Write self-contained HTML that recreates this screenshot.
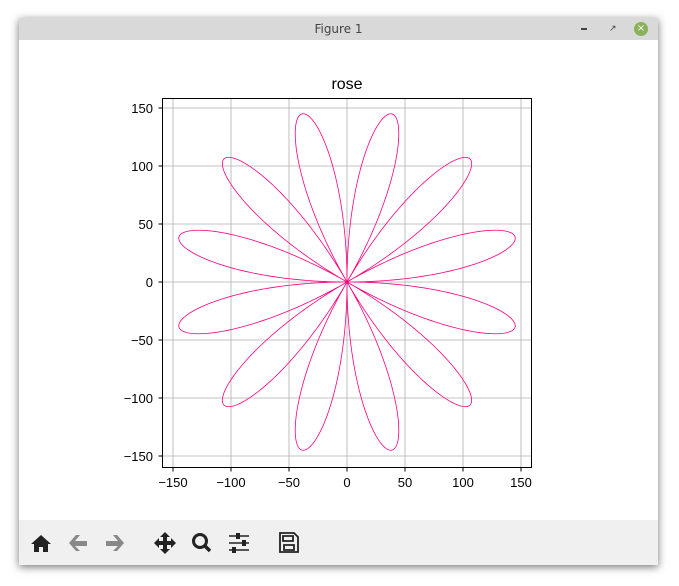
<!DOCTYPE html>
<html><head><meta charset="utf-8"><style>
body{margin:0;width:679px;height:586px;background:#fff;overflow:hidden;font-family:"Liberation Sans","DejaVu Sans",sans-serif;}
.win{position:absolute;left:19px;top:18px;width:639px;height:547px;background:#fff;box-shadow:0 2px 8px rgba(0,0,0,.55);}
.tb{position:absolute;left:0;top:0;width:639px;height:22px;background:#d9d9d9;text-align:center;font:12px "DejaVu Sans",sans-serif;color:#444;line-height:23px;}
.bar{position:absolute;left:0;top:502px;width:639px;height:45px;background:#f0f0f0;}
</style></head><body>
<div class="win">
<div class="tb">Figure 1
<span style="position:absolute;left:562px;top:10px;width:6px;height:2px;background:#444"></span>
<span style="position:absolute;left:590px;top:7px;font-size:9px;line-height:9px">↗</span>
<span style="position:absolute;left:615px;top:4px;width:14px;height:14px;border-radius:50%;background:#8bb15a;color:#fff;font-size:10px;line-height:14px">×</span>
</div>
<div class="bar"></div>
</div>
<svg width="679" height="586" style="position:absolute;left:0;top:0" font-family="Liberation Sans, DejaVu Sans, sans-serif" font-size="13">
<text x="347" y="89" text-anchor="middle" font-size="16">rose</text>
<g stroke="#b0b0b0" stroke-width="0.8" id="grid"></g>
<path id="rose" fill="none" stroke="#ff0080" stroke-width="0.8"/>
<rect x="162.5" y="98.5" width="369" height="369" fill="none" stroke="#000" stroke-width="1"/>
<g id="ticks" stroke="#000"></g>
<g id="lab"></g>
<g fill="#222">
<path d="M41 535 L31 544 L34 544 L34 552 L39 552 L39 547 L43 547 L43 552 L48 552 L48 544 L51 544 Z"/>
<path d="M69 543 L76 535 L80 535 L75 541 L87 541 L87 546 L75 546 L80 551 L76 551 Z" fill="#888"/>
<path d="M124 543 L117 535 L113 535 L118 541 L106 541 L106 546 L118 546 L113 551 L117 551 Z" fill="#888"/>
<path d="M165 532 L170 537 L167 537 L167 541 L171 541 L171 538 L176 543 L171 548 L171 545 L167 545 L167 549 L170 549 L165 554 L160 549 L163 549 L163 545 L159 545 L159 548 L154 543 L159 538 L159 541 L163 541 L163 537 L160 537 Z"/>
<circle cx="200" cy="541" r="6.5" fill="none" stroke="#222" stroke-width="3"/>
<path d="M204 545 L210 551" stroke="#222" stroke-width="3.5"/>
<g stroke="#222" stroke-width="1.6"><path d="M229 536H249M229 543H249M229 550H249"/></g>
<rect x="236" y="533" width="4" height="6"/><rect x="242" y="540" width="4" height="6"/><rect x="232" y="547" width="4" height="6"/>
<path d="M280 533 H294 L298 537 V552 H280 Z M283 536 V541 H293 V536 Z M284 545 V550 H294 V545 Z" fill="none" stroke="#222" stroke-width="1.8"/>
</g>
</svg>
<script>
var cx=347,cy=282,s=1.16,d="";
for(var i=0;i<=2400;i++){var t=i/2400*2*Math.PI;var r=150*Math.sin(6*t);
d+=(i?"L":"M")+(cx+s*r*Math.cos(t)).toFixed(2)+" "+(cy-s*r*Math.sin(t)).toFixed(2);}
document.getElementById("rose").setAttribute("d",d);
var g="",tk="",lb="";
for(var v=-150;v<=150;v+=50){var x=cx+s*v,y=cy-s*v;var lab=(v<0?"\u2212":"")+Math.abs(v);
g+='<path d="M'+x+' 98V467M162 '+y+'H531"/>';
tk+='<path d="M'+x+' 467.5v4M162.5 '+y+'h-4"/>';
lb+='<text x="'+x+'" y="487" text-anchor="middle">'+lab+'</text><text x="153" y="'+(y+5)+'" text-anchor="end">'+lab+'</text>';}
document.getElementById("grid").innerHTML=g;
document.getElementById("ticks").innerHTML=tk;
document.getElementById("lab").innerHTML=lab=lb;
</script>
</body></html>
